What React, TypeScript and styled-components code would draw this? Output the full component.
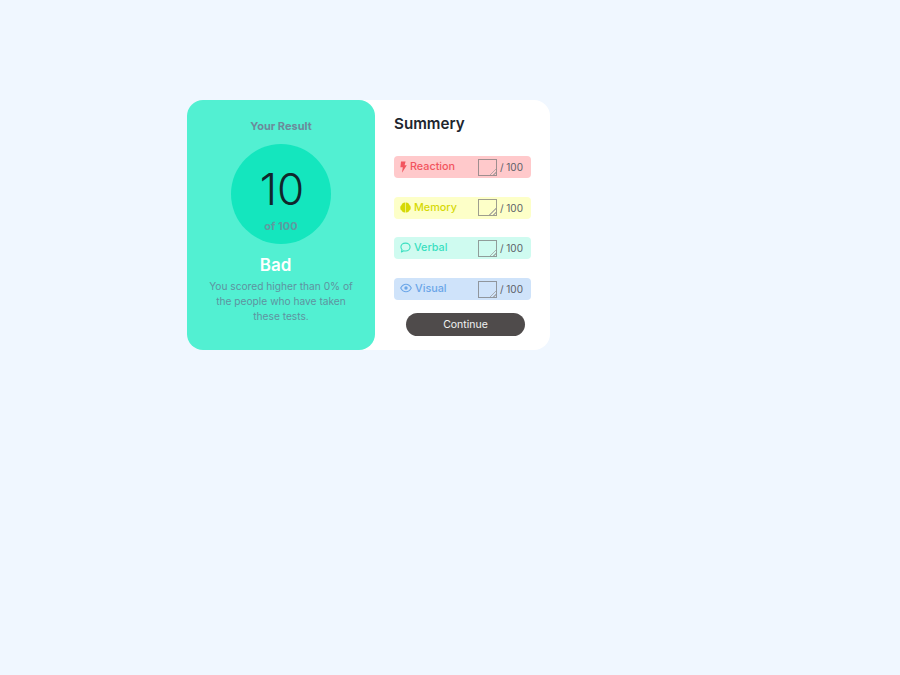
import React from 'react'
import styled, { createGlobalStyle } from "styled-components";

const GlobalStyle = createGlobalStyle`
    html, body {
        margin: 0;
        padding: 0;
        height: 100%;
        background-color: #F0F7FF;
        font-family: "Inter", "Noto Sans", sans-serif;
    }
`;

const ZapIcon = () => (
    <svg width="7" height="12" viewBox="0 0 7 12" fill="#F2555F">
        <path d="M1 0.400h4.600L4.600 4.200h2.200L2 11.800l.8-5.600H.4z" />
    </svg>
)

const BrainIcon = () => (
    <svg width="11" height="11" viewBox="0 0 12 12" fill="#D6D906">
        <path d="M5.700 0.500v11C3.600 11.700 2.300 10.800 2 9.400 0.700 8.900 0.200 7.800 0.400 6.500 0.100 5.400 0.500 4.100 1.600 3.500 1.900 1.800 3.500 0.400 5.700 0.500z" />
        <path d="M6.300 0.500v11C8.400 11.700 9.700 10.800 10 9.400 11.300 8.900 11.800 7.800 11.600 6.500 11.900 5.400 11.500 4.100 10.400 3.500 10.100 1.800 8.500 0.400 6.300 0.500z" />
    </svg>
)

const ChatIcon = () => (
    <svg width="11" height="11" viewBox="0 0 12 12" fill="none" stroke="#3ADFC0" strokeWidth="1.200" strokeLinejoin="round">
        <path d="M6 1.200c2.800 0 5 1.900 5 4.300S8.800 9.800 6 9.800c-.7 0-1.300-.1-1.900-.3L1.600 10.800l.6-2.500C1.400 7.500 1 6.600 1 5.500 1 3.100 3.200 1.200 6 1.200z" />
    </svg>
)

const EyeIcon = () => (
    <svg width="12" height="10" viewBox="0 0 12 10" fill="none" stroke="#6BA6E8" strokeWidth="1.100">
        <path d="M0.700 5C2 2.500 3.800 1.200 6 1.200S10 2.500 11.300 5C10 7.500 8.200 8.800 6 8.800S2 7.500 0.700 5z" />
        <circle cx="6" cy="5" r="1.700" fill="#6BA6E8" stroke="none" />
    </svg>
)

const categories = [
    { name: "Reaction", icon: <ZapIcon />, bg: "#FFC9CB", color: "#F2555F", lift: 1 },
    { name: "Memory", icon: <BrainIcon />, bg: "#FDFFC8", color: "#D6D906", lift: 1 },
    { name: "Verbal", icon: <ChatIcon />, bg: "#CFFBF0", color: "#3ADFC0", lift: 1 },
    { name: "Visual", icon: <EyeIcon />, bg: "#CFE3FA", color: "#6BA6E8", lift: 2 },
]

const App = () => {
    return (
    <Page>
        <GlobalStyle />
        <Card>
            <ResultPanel>
                <ResultTitle>Your Result</ResultTitle>
                <ScoreCircle>
                    <ScoreValue>10</ScoreValue>
                    <ScoreOf>of 100</ScoreOf>
                </ScoreCircle>
                <Grade>Bad</Grade>
                <ResultText>You scored higher than 0% of the people who have taken these tests.</ResultText>
            </ResultPanel>
            <SummaryPanel>
                <SummaryTitle>Summery</SummaryTitle>
                <Rows>
                    {categories.map((item) => (
                        <Row key={item.name} $bg={item.bg}>
                            <RowLabel $color={item.color} $lift={item.lift}>
                                <IconSlot>{item.icon}</IconSlot>
                                {item.name}
                            </RowLabel>
                            <ScoreInput aria-label={item.name} />
                            <RowTotal>/ 100</RowTotal>
                        </Row>
                    ))}
                </Rows>
                <ContinueButton type="button">Continue</ContinueButton>
            </SummaryPanel>
        </Card>
    </Page>
    )
}

const Page = styled.main`
    min-height: 100vh;
    box-sizing: border-box;
    padding: 100px 0 0 187px;
    background-color: #F0F7FF;
`;

const Card = styled.section`
    display: flex;
    width: 363px;
    height: 250px;
    background-color: #FFFFFF;
    border-radius: 16px;
`;

const ResultPanel = styled.div`
    width: 188px;
    box-sizing: border-box;
    padding: 19px 18px 0;
    display: flex;
    flex-direction: column;
    align-items: center;
    background-color: #52F0D2;
    border-radius: 16px;
`;

const ResultTitle = styled.h2`
    margin: 0;
    font-size: 11px;
    line-height: 14px;
    font-weight: 700;
    color: #6C8A9B;
`;

const ScoreCircle = styled.div`
    width: 100px;
    height: 100px;
    margin-top: 11px;
    display: flex;
    flex-direction: column;
    align-items: center;
    background-color: #14E6BE;
    border-radius: 50%;
`;

const ScoreValue = styled.span`
    margin: 19px 0 0 2px;
    font-size: 44px;
    line-height: 52px;
    font-weight: 300;
    color: #10262C;
`;

const ScoreOf = styled.span`
    margin-top: 4px;
    font-size: 11px;
    line-height: 14px;
    font-weight: 700;
    color: #5E9CA0;
`;

const Grade = styled.h3`
    margin: 10px 11px 0 0;
    font-size: 17px;
    line-height: 22px;
    font-weight: 600;
    color: #FFFFFF;
`;

const ResultText = styled.p`
    margin: 3px 0 0;
    font-size: 10.2px;
    line-height: 15px;
    text-align: center;
    color: #5F93A0;
`;

const SummaryPanel = styled.div`
    flex: 1;
    box-sizing: border-box;
    padding: 13px 19px 0;
    display: flex;
    flex-direction: column;
`;

const SummaryTitle = styled.h2`
    margin: 0;
    font-size: 15.2px;
    line-height: 22px;
    font-weight: 600;
    color: #20262E;
`;

const Rows = styled.div`
    margin-top: 21px;
    display: flex;
    flex-direction: column;
    gap: 18.7px;
`;

const Row = styled.div<{ $bg: string }>`
    height: 22px;
    box-sizing: border-box;
    padding: 0 8px 0 6px;
    display: flex;
    align-items: center;
    background-color: ${(p) => p.$bg};
    border-radius: 4px;
`;

const RowLabel = styled.span<{ $color: string; $lift: number }>`
    flex: 1;
    display: flex;
    align-items: center;
    gap: 3px;
    margin-top: -${(p) => p.$lift}px;
    font-size: 10.8px;
    font-weight: 500;
    color: ${(p) => p.$color};
`;

const IconSlot = styled.span`
    display: flex;
    align-items: center;
`;

const ScoreInput = styled.textarea`
    width: 19px;
    height: 17px;
    margin: 0 3px 0 0;
    padding: 0;
    box-sizing: border-box;
    background: transparent;
    border: 1px solid #767676;
    border-radius: 0;
    opacity: 0.7;

    &::-webkit-resizer {
        background: linear-gradient(135deg, transparent 50%, #9A9A9A 50%, #9A9A9A 62%, transparent 62%, transparent 74%, #9A9A9A 74%, #9A9A9A 86%, transparent 86%) right bottom / 7px 7px no-repeat;
    }
`;

const RowTotal = styled.span`
    font-size: 10px;
    color: #5C6068;
`;

const ContinueButton = styled.button`
    width: 119px;
    height: 23px;
    margin: 13px 0 0 12px;
    padding: 0;
    border: none;
    border-radius: 12px;
    background-color: #4F4B4B;
    color: #F2F2F2;
    font-family: inherit;
    font-size: 10.5px;
`;

export default App;
